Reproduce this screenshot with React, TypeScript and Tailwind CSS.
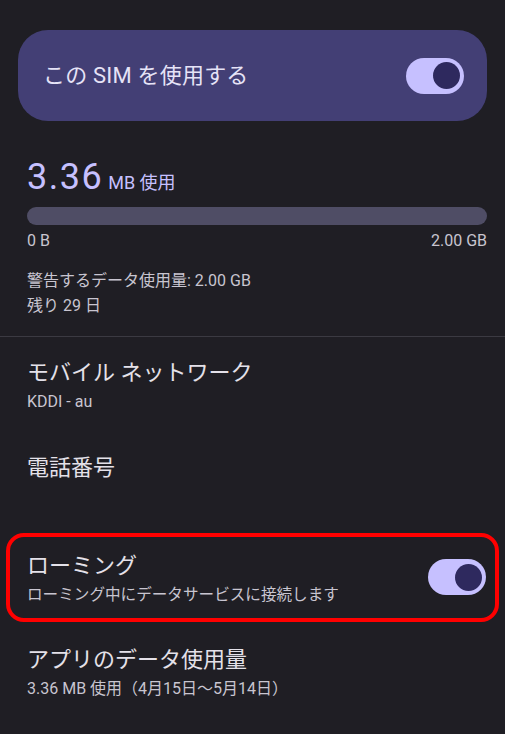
const FONT = { fontFamily: '"Roboto", "Noto Sans CJK JP", sans-serif' }

function Switch({ className = '' }: { className?: string }) {
  return (
    <div className={`w-[58px] h-[36px] rounded-full bg-[#c6c0ff] flex items-center justify-end pr-[4px] shrink-0 ${className}`}>
      <div className="w-[27px] h-[27px] rounded-full bg-[#2e295e]" />
    </div>
  )
}

export default function App() {
  return (
    <div className="w-[505px] h-[734px] bg-[#1f1e24] overflow-hidden" style={FONT}>
      {/* SIM トグル */}
      <div className="pt-[30px] px-[18px]">
        <div className="h-[91px] rounded-[30px] bg-[#433f75] flex items-center justify-between pl-[25px] pr-[23px]">
          <span className="text-[22px] leading-[28px] text-[#e6e3f7] tracking-[0.2px]">この SIM を使用する</span>
          <Switch />
        </div>
      </div>

      {/* データ使用量 */}
      <div className="pl-[27px] pr-[18px]">
        <div className="mt-[36px] h-[40px] flex items-baseline text-[#c6c0ff]">
          <span className="text-[36px] leading-[40px] tracking-[1.5px]">3.36</span>
          <span className="text-[18px] leading-[40px] ml-[5px]">MB 使用</span>
        </div>
        <div className="mt-[10px] h-[18px] rounded-full bg-[#4f4d65]" />
        <div className="mt-[6px] flex justify-between text-[16px] leading-[20px] text-[#c8c5d0]">
          <span>0 B</span>
          <span>2.00 GB</span>
        </div>
        <div className="mt-[17px] text-[16px] leading-[25px] text-[#c8c5d0]">
          <p>警告するデータ使用量: 2.00 GB</p>
          <p>残り 29 日</p>
        </div>
      </div>

      <div className="mt-[18px] h-px bg-[#3b3a42]" />

      {/* 設定項目 */}
      <div className="pl-[27px] pr-[18px]">
        <p className="mt-[22px] text-[22px] leading-[28px] text-[#e4e1e9]">モバイル ネットワーク</p>
        <p className="mt-[4px] text-[16px] leading-[22px] text-[#c8c5d0]">KDDI - au</p>

        <p className="mt-[41px] text-[22px] leading-[28px] text-[#e4e1e9]">電話番号</p>
      </div>

      <div className="mt-[51px] mx-[6px] border-4 border-[#ff0000] rounded-[18px] flex items-center justify-between pl-[17px] pr-[9px] pt-[15px] pb-[12px]">
        <div>
          <p className="text-[22px] leading-[28px] text-[#e4e1e9]">ローミング</p>
          <p className="mt-[4px] text-[15.6px] leading-[22px] text-[#c8c5d0]">ローミング中にデータサービスに接続します</p>
        </div>
        <Switch className="-mt-[4px]" />
      </div>

      <div className="pl-[27px] pr-[18px]">
        <p className="mt-[24px] text-[22px] leading-[28px] text-[#e4e1e9]">アプリのデータ使用量</p>
        <p className="mt-[4px] text-[16px] leading-[22px] text-[#c8c5d0]">3.36 MB 使用（4月15日〜5月14日）</p>
      </div>
    </div>
  )
}
